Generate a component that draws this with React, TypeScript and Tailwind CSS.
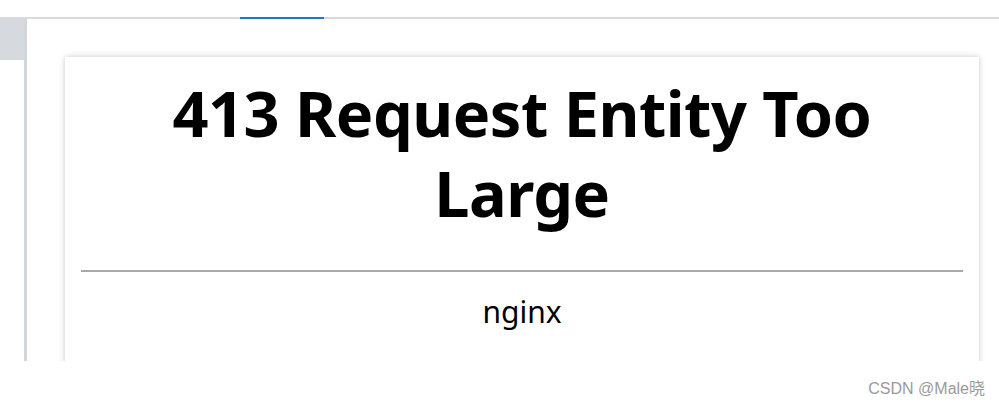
export default function App() {
  return (
    <div className="w-[999px] h-[408px] bg-white overflow-hidden flex flex-col font-['Noto_Sans',sans-serif]">
      {/* browser content */}
      <div className="h-[361px] flex flex-col overflow-hidden">
        <div className="h-[17px] shrink-0" />
        <div className="h-[2px] shrink-0 bg-[#d8dadd]">
          <div className="ml-[240px] w-[84px] h-full bg-[#1a73e8]" />
        </div>
        <div className="flex flex-1 min-h-0">
          <div className="w-[24px] shrink-0">
            <div className="h-[41px] bg-[#d6d9dd]" />
          </div>
          <div className="w-[3px] shrink-0 bg-[#d2d7dc]" />
          <div className="flex-1 pl-[38px] pr-[20px] pt-[38px] overflow-hidden">
            <div className="bg-white shadow-[0_0_6px_rgba(0,0,0,0.22)] px-[16px] h-[400px]">
              <h1 className="text-center font-bold text-black text-[63px] leading-[80px] pt-[16px] px-[40px] tracking-[-0.5px]">
                413 Request Entity Too Large
              </h1>
              <div className="mt-[37px] h-[2px] bg-[#a9a9a9]" />
              <p className="text-center text-[30px] leading-[40px] text-black mt-[20px]">nginx</p>
            </div>
          </div>
        </div>
      </div>
      <div className="flex-1 flex items-end justify-end pr-[14px] pb-[7px]">
        <span className="text-[16px] text-[#9a9a9a] font-['Liberation_Sans','Noto_Sans_CJK_SC',sans-serif]">
          CSDN @Male晓
        </span>
      </div>
    </div>
  )
}
